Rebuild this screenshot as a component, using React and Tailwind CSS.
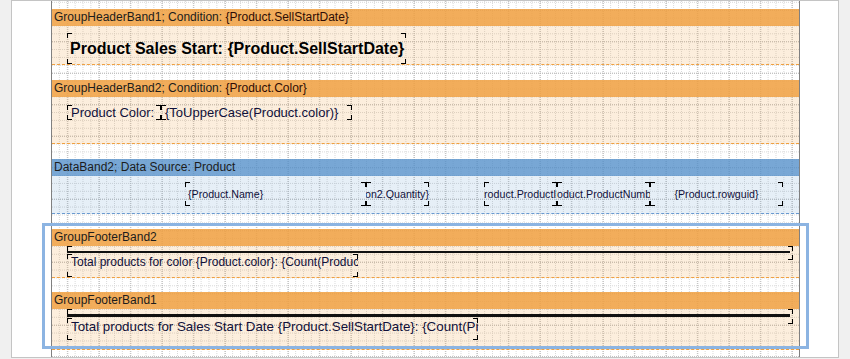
import React from "react";

const font = "font-['Liberation_Sans',Arial,sans-serif]";

const gridBg =
  "[background-image:conic-gradient(at_1px_1px,transparent_75%,#b9b9b9_0),conic-gradient(at_1px_1px,transparent_75%,#b9b9b9_0),conic-gradient(at_1px_1px,transparent_75%,#d9d9d9_0),conic-gradient(at_1px_1px,transparent_75%,#d9d9d9_0)] [background-size:31.5px_2px,2px_31.5px,7.875px_2px,2px_7.875px] [background-position:15.3px_0,0_8.8px,6.875px_0,0_0.8px]";

const Corners = ({ tl = true, tr = true, bl = true, br = true }) => (
  <>
    {tl && <span className="absolute left-0 top-0 w-[5px] h-[5px] border-l border-t border-black" />}
    {tr && <span className="absolute right-0 top-0 w-[5px] h-[5px] border-r border-t border-black" />}
    {bl && <span className="absolute left-0 bottom-0 w-[5px] h-[5px] border-l border-b border-black" />}
    {br && <span className="absolute right-0 bottom-0 w-[5px] h-[5px] border-r border-b border-black" />}
  </>
);

const BandHeader = ({ children, blue }) => (
  <div
    className={`h-[17px] shrink-0 pl-[2px] text-[12px] leading-[17px] whitespace-nowrap text-[#1c1c1c] ${
      blue ? "bg-[rgba(80,140,200,0.77)]" : "bg-[rgba(240,160,64,0.86)]"
    }`}
  >
    {children}
  </div>
);

const Gap = ({ h }) => <div className={`shrink-0 ${h}`} />;

export default function App() {
  return (
    <div className={`w-[850px] h-[359px] bg-[#f0f0f0] flex overflow-hidden ${font}`}>
      <div className="w-[11px] shrink-0" />
      <div className="relative w-[828px] h-[358px] shrink-0 border border-[#c4c4c4] bg-white overflow-hidden flex pl-[39px]">
        <div className={`w-[749px] h-[400px] shrink-0 border-x border-[#808080] flex flex-col ${gridBg}`}>
          <Gap h="h-[8px]" />

          <BandHeader>
            GroupHeaderBand1; Condition: <span className="text-[#2e0c04]">{"{Product.SellStartDate}"}</span>
          </BandHeader>
          <div className="relative h-[39px] shrink-0 bg-[rgba(240,160,64,0.18)] border-b border-dashed border-[#f0a040]">
            <div className="absolute left-[15px] top-[7px] w-[339px] h-[31px] flex items-center pl-[3px]">
              <span className="text-[16px] font-bold text-black whitespace-nowrap">
                Product Sales Start: {"{Product.SellStartDate}"}
              </span>
              <Corners />
            </div>
          </div>

          <Gap h="h-[15px]" />

          <BandHeader>
            GroupHeaderBand2; Condition: <span className="text-[#2e0c04]">{"{Product.Color}"}</span>
          </BandHeader>
          <div className="relative h-[47px] shrink-0 bg-[rgba(240,160,64,0.18)] border-b border-dashed border-[#f0a040]">
            <div className="absolute left-[15px] top-[8px] w-[94px] h-[15px] flex items-center pl-[4px] overflow-hidden">
              <span className="text-[13px] leading-[15px] text-[#10103a] whitespace-nowrap">Product Color:</span>
              <Corners />
            </div>
            <div className="absolute left-[109px] top-[8px] w-[191px] h-[15px] flex items-center pl-[4px] overflow-hidden">
              <span className="text-[13px] leading-[15px] text-[#10103a] whitespace-nowrap">
                {"{ToUpperCase(Product.color)}"}
              </span>
              <Corners />
            </div>
          </div>

          <Gap h="h-[15px]" />

          <BandHeader blue>DataBand2; Data Source: Product</BandHeader>
          <div className="relative h-[38px] shrink-0 bg-[rgba(80,140,200,0.14)] border-b border-dashed border-[#6a9ad0]">
            <div className="absolute left-[133px] top-[6px] w-[181px] h-[24px] flex items-center pl-[3px] overflow-hidden">
              <span className="text-[10.67px] text-[#10103a] whitespace-nowrap">{"{Product.Name}"}</span>
              <Corners />
            </div>
            <div className="absolute left-[314px] top-[6px] w-[63px] h-[24px] flex items-center justify-end overflow-hidden">
              <span className="text-[10.67px] text-[#10103a] whitespace-nowrap">{"{Production2.Quantity}"}</span>
              <Corners />
            </div>
            <div className="absolute left-[432px] top-[6px] w-[73px] h-[24px] flex items-center justify-center overflow-hidden">
              <span className="text-[10.67px] text-[#10103a] whitespace-nowrap shrink-0">{"{Product.ProductID}"}</span>
              <Corners />
            </div>
            <div className="absolute left-[505px] top-[6px] w-[93px] h-[24px] flex items-center justify-center overflow-hidden">
              <span className="text-[10.67px] text-[#10103a] whitespace-nowrap shrink-0">{"{Product.ProductNumber}"}</span>
              <Corners />
            </div>
            <div className="absolute left-[598px] top-[6px] w-[133px] h-[24px] flex items-center justify-center overflow-hidden">
              <span className="text-[10.67px] text-[#10103a] whitespace-nowrap shrink-0">{"{Product.rowguid}"}</span>
              <Corners />
            </div>
          </div>

          <Gap h="h-[15px]" />

          <BandHeader>GroupFooterBand2</BandHeader>
          <div className="relative h-[32px] shrink-0 bg-[rgba(240,160,64,0.18)] border-b border-dashed border-[#f0a040]">
            <div className="absolute left-[15px] top-0 w-[726px] h-[14px]">
              <div className="absolute left-0 right-[3px] top-[5px] h-[2px] bg-[#111]" />
              <Corners bl={false} br={true} />
            </div>
            <div className="absolute left-[15px] top-[8px] w-[291px] h-[23px] pl-[4px] pt-[1px] overflow-hidden">
              <span className="block text-[12px] leading-[14px] text-[#10103a] whitespace-nowrap">
                Total products for color {"{Product.color}"}: {"{Count(Product)}"}
              </span>
              <Corners />
            </div>
          </div>

          <Gap h="h-[14px]" />

          <BandHeader>GroupFooterBand1</BandHeader>
          <div className="relative h-[41px] shrink-0 bg-[rgba(240,160,64,0.18)] border-b border-dashed border-[#f0a040]">
            <div className="absolute left-[15px] top-0 w-[726px] h-[15px]">
              <div className="absolute left-0 right-[3px] top-[5px] h-[3px] bg-[#111]" />
              <Corners bl={false} />
            </div>
            <div className="absolute left-[15px] top-[9px] w-[411px] h-[22px] pl-[4px] pt-[1px] overflow-hidden">
              <span className="block text-[13.33px] leading-[15px] text-[#10103a] whitespace-nowrap">
                Total products for Sales Start Date {"{Product.SellStartDate}"}: {"{Count(Product)}"}
              </span>
              <Corners />
            </div>
          </div>
        </div>

        <div className="absolute left-[30px] top-[222px] w-[767px] h-[126px] border-[3px] border-[#8cb4e2]" />
      </div>
      <div className="w-[11px] shrink-0" />
    </div>
  );
}
